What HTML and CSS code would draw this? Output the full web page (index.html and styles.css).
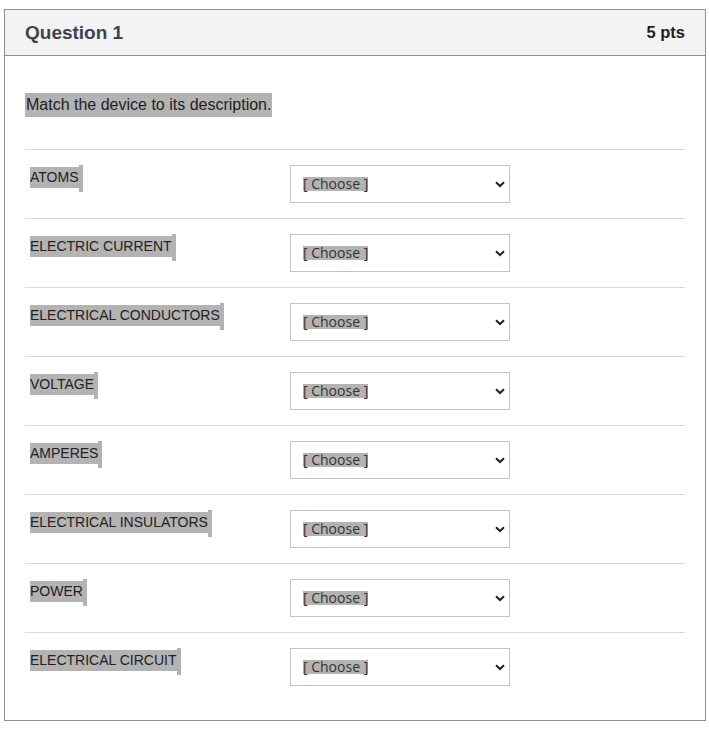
FILE: index.html
```html
<!DOCTYPE html>
<html>
<head>
<meta charset="utf-8">
<link rel="stylesheet" href="styles.css">
</head>
<body>
<div class="quiz">
  <div class="quiz-header">
    <h2 class="quiz-title">Question 1</h2>
    <span class="quiz-pts">5 pts</span>
  </div>
  <div class="quiz-body">
    <p class="prompt"><span class="hl">Match the device to its description.</span></p>
    <div class="rows">
      <div class="row"><div class="term"><span class="hl term-text">ATOMS</span></div><div class="choose"><span class="hl choose-text">[ Choose ]</span><svg class="chev" width="10" height="7" viewBox="0 0 10 7"><path d="M1 1.2 L5 5 L9 1.2" fill="none" stroke="#222" stroke-width="2"/></svg></div></div>
      <div class="row"><div class="term"><span class="hl term-text">ELECTRIC CURRENT</span></div><div class="choose"><span class="hl choose-text">[ Choose ]</span><svg class="chev" width="10" height="7" viewBox="0 0 10 7"><path d="M1 1.2 L5 5 L9 1.2" fill="none" stroke="#222" stroke-width="2"/></svg></div></div>
      <div class="row"><div class="term"><span class="hl term-text">ELECTRICAL CONDUCTORS</span></div><div class="choose"><span class="hl choose-text">[ Choose ]</span><svg class="chev" width="10" height="7" viewBox="0 0 10 7"><path d="M1 1.2 L5 5 L9 1.2" fill="none" stroke="#222" stroke-width="2"/></svg></div></div>
      <div class="row"><div class="term"><span class="hl term-text">VOLTAGE</span></div><div class="choose"><span class="hl choose-text">[ Choose ]</span><svg class="chev" width="10" height="7" viewBox="0 0 10 7"><path d="M1 1.2 L5 5 L9 1.2" fill="none" stroke="#222" stroke-width="2"/></svg></div></div>
      <div class="row"><div class="term"><span class="hl term-text">AMPERES</span></div><div class="choose"><span class="hl choose-text">[ Choose ]</span><svg class="chev" width="10" height="7" viewBox="0 0 10 7"><path d="M1 1.2 L5 5 L9 1.2" fill="none" stroke="#222" stroke-width="2"/></svg></div></div>
      <div class="row"><div class="term"><span class="hl term-text">ELECTRICAL INSULATORS</span></div><div class="choose"><span class="hl choose-text">[ Choose ]</span><svg class="chev" width="10" height="7" viewBox="0 0 10 7"><path d="M1 1.2 L5 5 L9 1.2" fill="none" stroke="#222" stroke-width="2"/></svg></div></div>
      <div class="row"><div class="term"><span class="hl term-text">POWER</span></div><div class="choose"><span class="hl choose-text">[ Choose ]</span><svg class="chev" width="10" height="7" viewBox="0 0 10 7"><path d="M1 1.2 L5 5 L9 1.2" fill="none" stroke="#222" stroke-width="2"/></svg></div></div>
      <div class="row"><div class="term"><span class="hl term-text">ELECTRICAL CIRCUIT</span></div><div class="choose"><span class="hl choose-text">[ Choose ]</span><svg class="chev" width="10" height="7" viewBox="0 0 10 7"><path d="M1 1.2 L5 5 L9 1.2" fill="none" stroke="#222" stroke-width="2"/></svg></div></div>
    </div>
  </div>
</div>
</body>
</html>
```
FILE: styles.css
```css
html, body {
  margin: 0;
  padding: 0;
  background: #ffffff;
}
body {
  padding: 9px 4px 0 4px;
  font-family: "Liberation Sans", Arial, sans-serif;
  color: #2d3b45;
}
.quiz {
  width: 700px;
  border: 1px solid #8f8f8f;
  background: #fff;
}
.quiz-header {
  box-sizing: border-box;
  background: #f3f3f3;
  border-bottom: 1px solid #8f8f8f;
  display: flex;
  align-items: center;
  justify-content: space-between;
  padding: 0 20px 0 20px;
  height: 46px;
}
.quiz-title {
  margin: 0;
  font-size: 19px;
  font-weight: bold;
  color: #3b454b;
}
.quiz-pts {
  font-size: 16.5px;
  font-weight: bold;
  color: #222;
}
.quiz-body {
  padding: 37px 20px 19px 20px;
}
.prompt {
  margin: 0 0 32px 0;
  font-size: 16px;
  color: #222;
}
.hl {
  background: #b3b3b3;
}
.prompt .hl {
  display: inline-block;
  line-height: 24px;
  padding: 0 1px;
}
.row {
  border-top: 1px solid #d9d9d9;
  padding: 15px 0 15px 0;
  display: grid;
  grid-template-columns: 265px 220px;
  align-items: start;
}
.term {
  padding-left: 5px;
  display: flex;
  align-items: flex-start;
}
.term-text {
  display: inline-block;
  font-size: 14px;
  line-height: 21px;
  margin-top: 2px;
  color: #222;
}
.term::after {
  content: "";
  display: block;
  width: 4px;
  height: 27px;
  background: #b3b3b3;
}
.choose {
  height: 38px;
  box-sizing: border-box;
  border: 1px solid #c4c4c4;
  display: flex;
  align-items: center;
  justify-content: space-between;
  padding: 0 4px 0 12px;
}
.choose-text {
  font-family: "Open Sans", "Noto Sans", sans-serif;
  font-size: 14px;
  line-height: 14px;
  color: #333;
}
.chev {
  display: block;
  margin-top: 1px;
}
```
